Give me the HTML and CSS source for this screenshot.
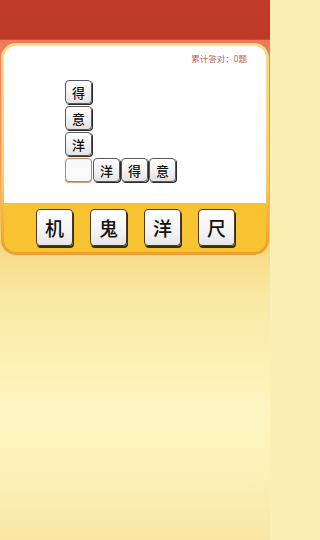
FILE: index.html
```html
<!DOCTYPE html>
<html lang="zh">
<head>
<meta charset="utf-8">
<title>成语接龙</title>
<link rel="stylesheet" href="styles.css">
</head>
<body>
<div class="header"></div>
<main class="main">
  <section class="card">
    <div class="board">
      <div class="counter">累计答对：0题</div>
      <div class="grid">
        <div class="tile c1 r1">得</div>
        <div class="tile c1 r2">意</div>
        <div class="tile c1 r3">洋</div>
        <div class="tile blank c1 r4"></div>
        <div class="tile c2 r4">洋</div>
        <div class="tile c3 r4">得</div>
        <div class="tile c4 r4">意</div>
      </div>
    </div>
    <div class="panel">
      <button class="key">机</button>
      <button class="key">鬼</button>
      <button class="key">洋</button>
      <button class="key">尺</button>
    </div>
  </section>
</main>
</body>
</html>
```

FILE: styles.css
```css
html, body {
  margin: 0;
  padding: 0;
}
html {
  background: #fbefb4;
}
body {
  width: 270px;
  height: 540px;
  overflow: hidden;
  font-family: "Noto Sans CJK SC", "Noto Sans", sans-serif;
  background: #fbefb4;
}
.header {
  height: 40px;
  background: linear-gradient(#c23b29, #bd3926 95%, #d0503a);
}
.main {
  height: 500px;
  padding: 3px 1px 0;
  box-sizing: border-box;
  background: linear-gradient(#ec7b5e 0px, #ef9558 120px, #f3bf55 175px, #f7dc8c 215px, #fae9a4 260px, #fdf6c2 370px, #fcf3bb 420px, #f9e6a5 500px);
}
.card {
  padding: 3px;
  border-radius: 15px;
  background: linear-gradient(#f7dc88, #f6d070 60%, #f2b648 80%, #ee9c2e);
}
.board {
  background: #fff;
  height: 157px;
  border-radius: 12px 12px 0 0;
  padding-top: 7px;
  box-sizing: border-box;
}
.counter {
  text-align: right;
  font-size: 8.5px;
  line-height: 10px;
  color: #c0625a;
  padding-right: 19px;
}
.grid {
  margin: 17px 0 0 61px;
  display: grid;
  grid-template-columns: repeat(4, 27px);
  grid-template-rows: repeat(4, 24px);
  column-gap: 1px;
  row-gap: 2px;
}
.c1 { grid-column: 1; }
.c2 { grid-column: 2; }
.c3 { grid-column: 3; }
.c4 { grid-column: 4; }
.r1 { grid-row: 1; }
.r2 { grid-row: 2; }
.r3 { grid-row: 3; }
.r4 { grid-row: 4; }
.tile {
  box-sizing: border-box;
  border: 1px solid #5a5a5a;
  border-radius: 4px;
  background: linear-gradient(#ffffff, #f1f1f1 60%, #e2e2e2);
  box-shadow: 1px 1px 0 #2a2a2a;
  display: flex;
  align-items: center;
  justify-content: center;
  font-size: 13px;
  font-weight: 500;
  color: #111;
  line-height: 1;
}
.tile.blank {
  border: 1.5px solid #c47f50;
  background: #fafafa;
  box-shadow: 0 1px 0 #d9a27a;
}
.panel {
  height: 49px;
  background: #f8c331;
  border-radius: 0 0 12px 12px;
  display: flex;
  justify-content: center;
  align-items: flex-start;
  gap: 17px;
  padding-top: 6px;
  padding-left: 1px;
  box-sizing: border-box;
}
.key {
  width: 37px;
  height: 37px;
  padding: 0;
  margin: 0;
  box-sizing: border-box;
  border: 1px solid #4a3a20;
  border-radius: 4px;
  background: linear-gradient(#ffffff, #f4f4f4 60%, #e6e6e6);
  box-shadow: 1px 2px 0 #3a2c14;
  font-family: "Noto Sans CJK SC", sans-serif;
  font-size: 19px;
  font-weight: 500;
  color: #111;
  display: flex;
  align-items: center;
  justify-content: center;
}
```
